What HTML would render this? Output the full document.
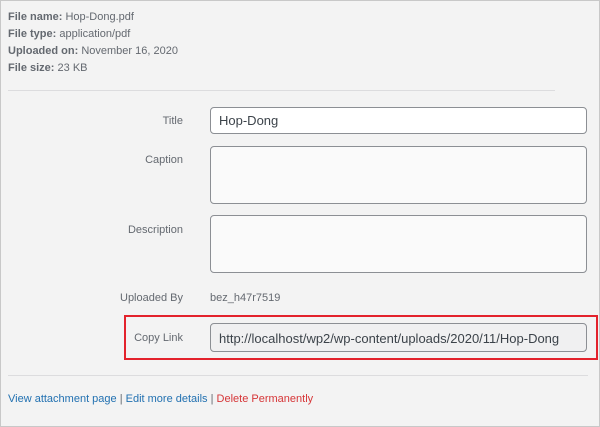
<!DOCTYPE html>
<html><head><style>
body{margin:0;width:600px;height:427px;background:#f3f3f3;font-family:"Liberation Sans",sans-serif;color:#646970;position:relative;overflow:hidden}
.frame{position:absolute;left:0;top:0;width:598px;height:425px;border:1px solid #c8c8c8}
.info{position:absolute;left:8px;top:9px;font-size:11px;line-height:17px;color:#646970}
.info b{font-weight:bold}
.hr{position:absolute;height:1px;background:#dcdcde}
.lab{position:absolute;right:417px;font-size:11px;color:#646970}
.inp{position:absolute;left:210px;width:377px;border:1px solid #8c8f94;border-radius:4px;background:#fff;box-sizing:border-box}
.inp span{position:absolute;left:8px;font-size:13px;color:#3c434a}
.red{position:absolute;left:124px;top:315px;width:470px;height:41px;border:2px solid #e3222c}
.links{position:absolute;left:8px;top:393px;font-size:11px;color:#2271b1}
</style></head><body>
<div class="frame"></div>
<div class="info"><b>File name:</b> Hop-Dong.pdf<br><b>File type:</b> application/pdf<br><b>Uploaded on:</b> November 16, 2020<br><b>File size:</b> 23 KB</div>
<div class="hr" style="left:8px;top:90px;width:547px"></div>
<div class="lab" style="top:115px">Title</div>
<div class="inp" style="top:107px;height:27px"><span style="top:5px">Hop-Dong</span></div>
<div class="lab" style="top:154px">Caption</div>
<div class="inp" style="top:146px;height:58px;background:#fafafa"></div>
<div class="lab" style="top:224px">Description</div>
<div class="inp" style="top:215px;height:58px;background:#fafafa"></div>
<div class="lab" style="top:292px">Uploaded By</div>
<div style="position:absolute;left:210px;top:292px;font-size:11px">bez_h47r7519</div>
<div class="red"></div>
<div class="lab" style="top:332px">Copy Link</div>
<div class="inp" style="top:323px;height:29px;width:377px;background:#f0f0f1"><span style="top:7px;white-space:nowrap">http://localhost/wp2/wp-content/uploads/2020/11/Hop-Dong</span></div>
<div class="hr" style="left:8px;top:375px;width:580px"></div>
<div class="links">View attachment page <span style="color:#646970">|</span> Edit more details <span style="color:#646970">|</span> <span style="color:#d63638">Delete Permanently</span></div>
</body></html>
